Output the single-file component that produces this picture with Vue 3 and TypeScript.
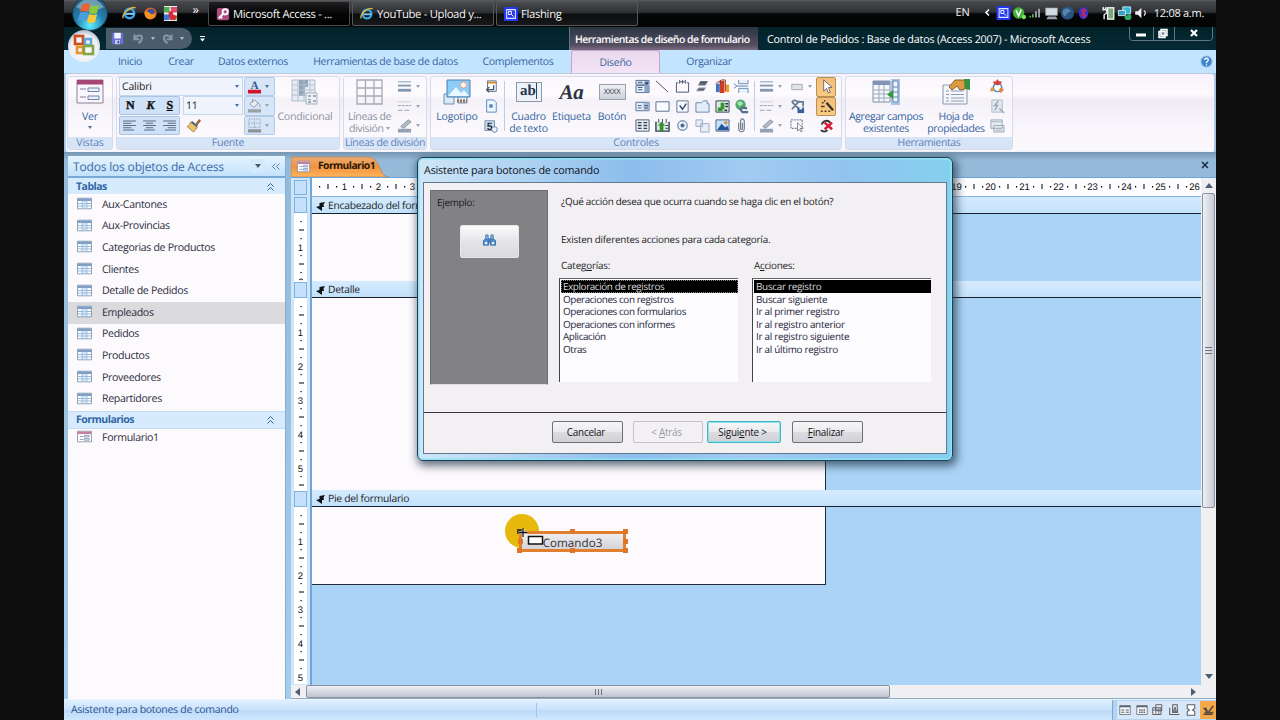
<script setup lang="ts">
interface Task { icon: string; label: string; active?: boolean }

const icons: Record<string, string> = {
  ie: '<circle cx="8" cy="8" r="5" fill="none" stroke="#39a5ea" stroke-width="2.6"/><path d="M4 8.4h9" stroke="#7fd0ff" stroke-width="2"/><path d="M1.500 13C-1 9 9 0 14.500 2" fill="none" stroke="#e8b93a" stroke-width="1.500"/>',
  firefox: '<circle cx="8" cy="8" r="6.500" fill="#e0641c"/><circle cx="8.500" cy="7" r="4" fill="#3d4fa0"/><path d="M2 5c2 0 3 2 5 2 1 2 4 3 6 0 0 5-3 7-6 7-4-1-6-5-5-9z" fill="#f79428"/>',
  puzzle: '<path d="M1 0h14v16H1z" fill="#eee"/><path d="M1 1h6v6H1z" fill="#4fae50"/><path d="M8 1h7v6H9z" fill="#e24a6d"/><path d="M1 9h6v6H1z" fill="#3973d6"/><path d="M9 10h6v5H9z" fill="#8dc95c"/><path d="M6 6l4-1 1 4 4 2-2 4H8l-2-4z" fill="#d32c36"/>',
  key: '<rect x="1" y="1" width="14" height="14" rx="2" fill="#b0497f"/><circle cx="10.500" cy="5.500" r="3" fill="none" stroke="#fff" stroke-width="2.200"/><path d="M8 8l-5 5M5 11l2 2" stroke="#fff" stroke-width="2.200"/>',
  pcs: '<rect x="0" y="0" width="16" height="16" rx="1" fill="#2439ee"/><path d="M3 3h10v10H3z" fill="none" stroke="#dfe3ff" stroke-width="1.200"/><path d="M5 5h3.500v3.500H5zM9 9l2 2" fill="none" stroke="#fff" stroke-width="1.100"/>',
  vv: '<circle cx="7" cy="8" r="6.500" fill="#43b53b"/><path d="M4 5l3 6 3-7" fill="none" stroke="#fff" stroke-width="1.800"/><circle cx="13" cy="12.500" r="2.500" fill="#6ee84c"/>',
  bars: '<path d="M2 13v-2M5 13v-4" stroke="#4ecb45" stroke-width="1.800"/><path d="M8.500 13V6M12 13V3" stroke="#b7c0c5" stroke-width="1.800"/>',
  monitor: '<path d="M1 2h14v9H1z" fill="#b8bec5"/><path d="M2 3h12v7H2z" fill="#d5dbe3"/><path d="M4 12h9l2 3H2z" fill="#98a0aa"/>',
  globe: '<circle cx="8" cy="8" r="7.500" fill="#28557f"/><path d="M3 5c4-4 7-2 9 1l-4 2-3 4C3 10 2 8 3 5z" fill="#5685ad"/>',
  blue: '<ellipse cx="8" cy="8" rx="5.500" ry="7" fill="#2736d8"/><path d="M5 5l6 6-3 2V3l3 2-6 6" fill="none" stroke="#cc2754" stroke-width="1.500"/>',
  plug: '<rect x="7" y="2" width="7" height="13" fill="#7aa67c" stroke="#edf6ee" stroke-width="1.500"/><path d="M1 4h5v4l-3 2v5M2 1v4M5 1v4" fill="none" stroke="#eee" stroke-width="1.600"/>',
  net: '<path d="M6 1h9v8H6z" fill="#35b7d4" stroke="#c9f1f9"/><path d="M1 5h8v6H1z" fill="#339fc8" stroke="#dceef4"/><path d="M8 12a4 4 0 1 0 6-3" fill="#31aa64"/>',
  sound: '<path d="M2 6h3l4-4v12l-4-4H2z" fill="#eee"/><path d="M12 5q3 3 0 6" fill="none" stroke="#eee" stroke-width="1.400"/>',
  disk: '<path d="M1 1h14v14H1z" fill="#6970cf"/><path d="M4 1h8v7H4z" fill="#f2f4ff"/><path d="M5 10h6v5H5z" fill="#c7cdf5"/><path d="M8 11h2v3H8z" fill="#3e4487"/>',
  undo: '<path d="M3 3v6h6M3.500 8C7 2 14 4 12 9c-1 3-3 4-4 5" fill="none" stroke="#8797a6" stroke-width="2.500"/>',
  redo: '<path d="M13 3v6H7M12.500 8C9 2 2 4 4 9c1 3 3 4 4 5" fill="none" stroke="#8797a6" stroke-width="2.500"/>',
  table: '<path d="M.5 1.500h15v13H.5z" fill="#fff" stroke="#7895b5"/><path d="M1 2h14v3H1z" fill="#7f9ec2"/><path d="M1 8h14M1 11h14M5.500 4v10M10.500 4v10" stroke="#91accb"/><path d="M6 5h4v9H6z" fill="#acd5ff" opacity=".6"/>',
  form: '<path d="M.5 1.500h15v13H.5z" fill="#fff" stroke="#8a8eaa"/><path d="M1 2h14v3H1z" fill="#c77ca2"/><path d="M3 8h4M3 11.500h4" stroke="#7d91a9"/><path d="M8 6.500h5v2H8zM8 10.500h5v2H8z" fill="#e7edf8" stroke="#8199b7"/>',
  fontcolor: '<text x="8" y="10.500" text-anchor="middle" font-family="Liberation Serif" font-weight="bold" font-size="12" fill="#38588b">A</text><path d="M1 11.500h14v4H1z" fill="#cf152c"/>',
  fill: '<path d="M3 6l5-4 4 4-5 4zM6 1v4M11 5c3 1 3 3 3 5" fill="#e8edf2" stroke="#8d9ba9"/><path d="M1 12h14v3.500H1z" fill="#9b9fa4"/>',
  gridline: '<path d="M2 1h12v9H2zM2 5.500h12M8 1v9" fill="none" stroke="#9aa8b8" stroke-dasharray="1.500 1"/><path d="M1 12h14v3.500H1z" fill="#8e9298"/>',
  brush: '<path d="M10 6l4-5 2 2-4 5z" fill="#9b6636"/><path d="M5 4l7 6-4 5-7-6c2 0 3-2 4-5z" fill="#eac568" stroke="#a48743"/><path d="M6 4l6 5" stroke="#526486" stroke-width="2"/>',
  combo: '<path d="M1 1.500h14v4H1zM1 7h14v7.500H1z" fill="#e8f1fc" stroke="#536c92"/><path d="M10 2h5v12h-5z" fill="#8ba3c4"/><path d="M11 4h3l-1.500 2zM3 3.500h5M3 9h5M3 11.500h5" stroke="#385072" fill="#263b58"/>',
  combo2: '<path d="M1 3.500h14v9H1z" fill="#e5eefb" stroke="#58708f"/><path d="M9 4h6v8H9z" fill="#a9bbd3"/><path d="M3 7h4M3 9.500h4M10 7h4M10 9.500h4" stroke="#425c83"/>',
  list: '<path d="M1 2h14v12H1z" fill="#e9eef6" stroke="#4b5a70"/><path d="M3 5h4M3 8h4M3 11h4M9 5h4M9 8h4M9 11h4" stroke="#333f54" stroke-width="1.400"/>',
  line: '<path d="M1 2l13 12" stroke="#445" stroke-width="1"/>',
  group: '<path d="M1.500 4v10h13V4h-2M1.500 4h2" fill="none" stroke="#42536e"/><path d="M5 3h6M5 1v4M8 1v4M11 1v4" stroke="#44556d"/>',
  rect: '<path d="M1 3h14v10H1z" fill="#f8fbff" stroke="#526b8c"/>',
  check: '<path d="M2 2h12v12H2z" fill="#f7faff" stroke="#63758e"/><path d="M5 7l3 4 4-6" fill="none" stroke="#34496b" stroke-width="1.600"/>',
  toggle: '<path d="M6 2h8l-3 5H3z" fill="#68717e"/><path d="M4 9h8l-3 4H1z" fill="#8a94a1"/><path d="M5 4h7M3 11h7" stroke="#454d59"/>',
  tab: '<path d="M1 4h6l2-2h4v3h2v9H1z" fill="#e3edfa" stroke="#6987aa"/>',
  pages: '<path d="M1 2h7v7H1zM6 6h9v9H6z" fill="#e6edf6" stroke="#9aabc0"/>',
  chart: '<path d="M1 5h4v9H1z" fill="#3577c9"/><path d="M5 2h5v13H5z" fill="#d33b27"/><path d="M11 6h4v8h-4z" fill="#f09a27"/><path d="M1 5l2-2h3v2M5 2l2-1h4v12" fill="none" stroke="#823720"/>',
  image: '<path d="M1 2h14v12H1z" fill="#c5e2fb" stroke="#506582"/><path d="M2 13l5-7 4 4 2-2 2 5z" fill="#29549b"/><circle cx="11.500" cy="5" r="1.800" fill="#e08a44"/>',
  ole: '<path d="M1 2h14v12H1z" fill="#dce8e0" stroke="#2f4052"/><path d="M3 9h3V4h4v7H8v2H3z" fill="#32932f"/><path d="M10 12h3M11 5h3M11 8h3" stroke="#25354c" stroke-width="1.600"/>',
  olegroup: '<path d="M1 4v10h14V4" fill="#dce8e0" stroke="#2f4052" stroke-width="1.500"/><path d="M4 1v4M8 1v4M12 1v4" stroke="#32465e"/><path d="M5 14V8H3l4-4 4 4H9v6z" fill="#32932f"/><path d="M11 8h3M11 11h3" stroke="#2f4052"/>',
  radio: '<circle cx="8" cy="8" r="5" fill="#edf5ff" stroke="#7894b3" stroke-width="1.500"/><circle cx="8" cy="8" r="2.200" fill="#4a6b93"/>',
  pagebreak: '<path d="M5 1v4h10V1M5 15v-5h10v5" fill="#e9f1ff" stroke="#6b87ad"/><path d="M3 7.500h12M0 5l3 2.500L0 10" fill="none" stroke="#467dbe"/>',
  link: '<circle cx="7" cy="6" r="5.500" fill="#50a86b"/><path d="M3 4l4-2 3 3-4 3z" fill="#a6e5b2"/><path d="M6 10l3 4h6M8 9l6 1" stroke="#55708c" stroke-width="2.300" fill="none"/>',
  clip: '<path d="M5 5v6c0 5 6 5 6 0V4c0-4-4-4-4 0v7c0 2 2 2 2 0V5" fill="none" stroke="#778290" stroke-width="1.300"/>',
  thick: '<path d="M1 3h14" stroke="#7b9bb0"/><path d="M1 7h14" stroke="#8199ad" stroke-width="2"/><path d="M1 12h14" stroke="#8099b1" stroke-width="3"/>',
  dashes: '<path d="M1 3h14" stroke="#a6b0bd" stroke-dasharray="1 1"/><path d="M1 7h14" stroke="#8d9aaa" stroke-dasharray="3 1"/><path d="M1 12h14" stroke="#8f9eae" stroke-dasharray="5 2"/>',
  pencolor: '<path d="M4 9l8-7 3 2-8 7z" fill="#b4bdc7" stroke="#8492a1"/><path d="M1 11.500h14v4H1z" fill="#91a3b4"/>',
  raised: '<path d="M2 5h12v6H2z" fill="#e1e5e9" stroke="#9aa3ad"/>',
  tools: '<path d="M2 3l10 10M10 2l-8 9M2 3q3-3 6 0M9 3h5v5" stroke="#64778e" stroke-width="1.800" fill="none"/><path d="M8 9h7v6H8z" fill="#355f9a"/><path d="M10 9h3v2h-3z" fill="#fff"/>',
  select: '<path d="M1 2h12v9H1z" fill="none" stroke="#566277" stroke-dasharray="2 1"/><path d="M8 5v9l2-2 2 3 1-1-2-3h3z" fill="#fff" stroke="#4c5360" stroke-width=".7"/>',
  cursor: '<path d="M5 1v12l3-3 2 5 2-1-2-5h4z" fill="#fff" stroke="#4a4a54" stroke-width=".8"/>',
  wand: '<path d="M8 4l7 8" stroke="#32302e" stroke-width="2.500"/><path d="M3 4h2M6 1v2M2 8h4M2 13h2M6 13h2M10 13h2" stroke="#50401d" stroke-width="1.500"/>',
  noax: '<path d="M3 7c1-5 7-5 9-2M9 13c-2 2-5 2-7 0" fill="none" stroke="#333" stroke-width="2"/><path d="M6 5l8 7M14 5l-8 7" stroke="#d91a37" stroke-width="2.600"/>',
  number: '<path d="M4 1h10v12H4z" fill="#fff" stroke="#48658d"/><path d="M4 3h10" stroke="#d98328" stroke-width="2"/><path d="M11 6v5H3M6 8l-3 3 3 3" fill="none" stroke="#47546e" stroke-width="1.500"/>',
  title: '<path d="M3 1h8l3 3v11H3z" fill="#edf7ff" stroke="#4e81b9"/><path d="M6 6h4v4H6z" fill="#5d89bf"/>',
  date: '<path d="M1 2h11v11H1z" fill="#cfdeed" stroke="#6785a7"/><text x="3" y="12" font-family="Liberation Sans" font-weight="bold" font-size="12" fill="#222c3d">5</text><circle cx="12" cy="12" r="3.200" fill="#eef6ff" stroke="#59759a"/>',
  order: '<circle cx="8" cy="9" r="4.500" fill="#fff" stroke="#4d83c3" stroke-width="1.500"/><path d="M8 0l1.500 2.500L13 3l-2 2.500-3 1.500-3-1.500L3 3l3.500-.5z" fill="#d2403a"/><path d="M1 9h4l-1 4H0z" fill="#d89a50"/><path d="M11 9l4 2-3 4-3-2z" fill="#e18743"/>',
  code: '<path d="M2 1h11v13H2z" fill="#e4e9f0" stroke="#adb7c4"/><path d="M9 2L5 7h3l-3 5M10 10l5 5" fill="none" stroke="#97a5b6" stroke-width="1.500"/>',
  subform: '<path d="M1 2h12v9H1zM4 8h11v7H4z" fill="#e7ebf0" stroke="#9ba9b9"/><path d="M1 4h12M6 11h7M6 13h7" stroke="#a9b5c2"/>',
  layout: '<path d="M1 2h14v12H1z" fill="#f6f8fa" stroke="#56616e"/><path d="M1 3.500h14M3 8h4M3 11h4M9 8h4M9 11h4" stroke="#56616e" stroke-width="1.500"/>',
  sheet: '<path d="M1 2h14v12H1z" fill="#f6f8fa" stroke="#56616e"/><path d="M1 3.500h14M4 8h2M7 8h2M10 8h2M4 11h2M7 11h2M10 11h2" stroke="#56616e" stroke-width="1.800"/>',
  pivot: '<path d="M5 1h8v8H5zM1 5h11v9H1z" fill="#eee" stroke="#555e6b" stroke-width="1.300"/><path d="M1 8h11M5 5v9M9 5v9" stroke="#555e6b"/>',
  pchart: '<path d="M5 1h6v10H5zM1 5v9h13" fill="#eee" stroke="#555e6b" stroke-width="1.400"/><path d="M5 12V7M8 12V4M11 12V8" stroke="#555e6b" stroke-width="2"/>',
  report: '<path d="M3 1h10v5l-3 2 3 2v5H3v-5l3-2-3-2z" fill="#fff" stroke="#555e6b" stroke-width="1.400"/>',
  design: '<path d="M1 5h5l2 5 6-8 2 1-6 8 5-1v3H2l3-3z" fill="#574b40"/><path d="M2 14h12" stroke="#5b4a3a" stroke-width="1.500"/>',
}

const tasks: Task[] = [
  { icon: 'key', label: 'Microsoft Access - ...', active: true },
  { icon: 'ie', label: 'YouTube - Upload y...' },
  { icon: 'pcs', label: 'Flashing' },
]
const tray = ['pcs', 'vv', 'bars', 'monitor', 'globe', 'blue']
const tray2 = ['plug', 'net', 'sound']
const tables = ['Aux-Cantones', 'Aux-Provincias', 'Categorias de Productos', 'Clientes', 'Detalle de Pedidos', 'Empleados', 'Pedidos', 'Productos', 'Proveedores', 'Repartidores']
const controls = ['combo', 'line', 'group', 'toggle', 'chart', 'pagebreak', 'combo2', 'rect', 'check', 'tab', 'ole', 'link', 'list', 'olegroup', 'radio', 'pages', 'image', 'clip']
const categories = ['Exploración de registros', 'Operaciones con registros', 'Operaciones con formularios', 'Operaciones con informes', 'Aplicación', 'Otras']
const actions = ['Buscar registro', 'Buscar siguiente', 'Ir al primer registro', 'Ir al registro anterior', 'Ir al registro siguiente', 'Ir al último registro']
const views = ['layout', 'sheet', 'pivot', 'pchart', 'report', 'design']
const sections = [
  { key: 'head', marks: 1 },
  { key: 'detail', marks: 5 },
  { key: 'foot', marks: 5 },
]
const step = 34
</script>

<template>
  <div class="stage">
    <div class="desktop">
      <header class="taskbar">
        <div class="quick">
          <svg v-for="i in ['ie', 'firefox', 'puzzle']" :key="i" class="i15" viewBox="0 0 16 16" v-html="icons[i]" />
          <span class="more">»</span>
        </div>
        <div v-for="t in tasks" :key="t.label" class="task" :class="{ active: t.active }">
          <svg class="i14" viewBox="0 0 16 16" v-html="icons[t.icon]" /><span>{{ t.label }}</span>
        </div>
        <div class="tray">
          <span class="lang">EN</span>
          <svg class="chev" viewBox="0 0 6 8"><path d="M5 1L2 4l3 3" fill="none" stroke="#fff" stroke-width="1.600" /></svg>
          <svg v-for="i in tray" :key="i" class="ti" viewBox="0 0 16 16" v-html="icons[i]" />
          <i class="traygap" />
          <svg v-for="i in tray2" :key="i" class="ti" viewBox="0 0 16 16" v-html="icons[i]" />
          <span class="clock">12:08 a.m.</span>
        </div>
        <svg class="orb" viewBox="0 0 38 38">
          <defs><radialGradient id="orb" cx=".5" cy=".85" r=".9"><stop offset="0" stop-color="#5ff0ff" /><stop offset=".45" stop-color="#237fae" /><stop offset="1" stop-color="#294b66" /></radialGradient></defs>
          <circle cx="19" cy="16" r="17.500" fill="url(#orb)" stroke="#17343f" />
          <path d="M5 10Q19-8 33 10 19 18 5 10z" fill="#9fc3d3" opacity=".6" />
          <path d="M11 8q4-3 8-1l-2 8q-4-2-8 0z" fill="#ed612d" /><path d="M20 8q4 2 8 0l-2 8q-4 2-8 0z" fill="#8fc73e" />
          <path d="M9 16q4-2 8 0l-2 8q-4-2-8 0z" fill="#4b9fe0" /><path d="M18 17q4 2 8 0l-2 8q-4 2-8 0z" fill="#fbc937" />
        </svg>
      </header>

      <div class="titlebar">
        <div class="qat">
          <svg class="i13" viewBox="0 0 16 16" v-html="icons.disk" />
          <svg class="i13 undo" viewBox="0 0 16 16" v-html="icons.undo" /><i class="dn pale" />
          <svg class="i13 redo" viewBox="0 0 16 16" v-html="icons.redo" /><i class="dn pale" />
        </div>
        <span class="qatmore"><svg class="qm" viewBox="0 0 5 6"><path d="M0 .5h5" stroke="#fff" /><path d="M0 2.500h5L2.500 5.500z" fill="#fff" /></svg></span>
        <span class="ctx">Herramientas de diseño de formulario</span>
        <span class="apptitle">Control de Pedidos : Base de datos (Access 2007) - Microsoft Access</span>
        <div class="winbtns">
          <svg class="wb" viewBox="0 0 84 14">
            <path d="M.5 0v11q0 2.500 3 2.500h77q3 0 3-2.500V0M24.500 0v13M45.500 0v13" fill="none" stroke="#5f7781" />
            <path d="M7 8h10" stroke="#fff" stroke-width="3" />
            <path d="M32 2.500h6v6h-6zM30 4.500h6v6h-6z" fill="#71858f" stroke="#fff" stroke-width="1.500" />
            <path d="M62 3l6 6M68 3l-6 6" stroke="#fff" stroke-width="2.200" />
          </svg>
        </div>
        <svg class="office" viewBox="0 0 34 34">
          <defs><radialGradient id="ob" cx=".5" cy=".6" r=".6"><stop offset="0" stop-color="#fff" /><stop offset=".75" stop-color="#eceef4" /><stop offset="1" stop-color="#a9b6c6" /></radialGradient></defs>
          <circle cx="17" cy="17" r="16" fill="url(#ob)" />
          <g fill="none" stroke-width="2.600"><rect x="8" y="7" width="8" height="8" stroke="#cf4b1c" /><rect x="18" y="10" width="6" height="6" stroke="#63a6db" /><rect x="10" y="18" width="6" height="6" stroke="#e9922a" /><rect x="17" y="17" width="9" height="8" stroke="#85a644" /></g>
        </svg>
      </div>

      <nav class="tabs">
        <span class="t1">Inicio</span><span class="t2">Crear</span><span class="t3">Datos externos</span><span class="t4">Herramientas de base de datos</span><span class="t5">Complementos</span><span class="t6 on">Diseño</span><span class="t7">Organizar</span>
        <svg class="help" viewBox="0 0 14 14"><circle cx="7" cy="7" r="6" fill="#3f83cf" stroke="#9cc3ea" /><path d="M5 5.500q0-2 2-2t2 1.800q0 1-2 2.200V9M7 10v1.300" fill="none" stroke="#fff" stroke-width="1.400" /></svg>
      </nav>

      <section class="ribbon">
        <div class="grp g1">
          <div class="body">
            <div class="big w45">
              <svg class="pic" viewBox="0 0 28 26"><path d="M1 1h26v23H1z" fill="#f9f5fc" stroke="#8c8193" /><path d="M1 1h26v4.500H1z" fill="#a54775" /><path d="M4 10h6M4 18h6" stroke="#8a7d99" /><path d="M12 9h11v3.500H12zM12 17h11v3.500H12z" fill="#e9effb" stroke="#7387ad" /></svg>
              <span>Ver</span><i class="dn" />
            </div>
          </div>
          <footer>Vistas</footer>
        </div>

        <div class="grp g2">
          <div class="body">
            <div class="fontcol">
              <div class="combo"><span>Calibri</span><i class="dn" /></div>
              <div class="frow"><div class="seg nks"><b>N</b><b class="it">K</b><b class="un">S</b></div><div class="combo size"><span>11</span><i class="dn" /></div></div>
              <div class="frow">
                <div class="seg"><svg v-for="n in 3" :key="n" class="al" viewBox="0 0 14 12"><path :d="n === 1 ? 'M0 1h14M0 3.500h9M0 6h14M0 8.500h9M0 11h12' : n === 2 ? 'M0 1h14M3 3.500h8M0 6h14M3 8.500h8M1 11h12' : 'M0 1h14M5 3.500h9M0 6h14M5 8.500h9M2 11h12'" stroke="#5c6b80" stroke-width="1.100" /></svg></div>
                <svg class="i15 brush" viewBox="0 0 16 16" v-html="icons.brush" />
              </div>
            </div>
            <div class="colorcol">
              <div v-for="i in ['fontcolor', 'fill', 'gridline']" :key="i" class="split"><svg class="i15" viewBox="0 0 16 16" v-html="icons[i]" /><i class="dn" :class="{ dim: i !== 'fontcolor' }" /></div>
            </div>
            <div class="big w61 gray">
              <svg class="pic" viewBox="0 0 28 26"><path d="M1 1h23v21H1z" fill="#e4ebf3" stroke="#b0bdcc" /><path d="M8 1h9v7h-3v9H8z" fill="#8fa3b9" /><path d="M1 6h23M1 11h23M1 16h23M7 1v21M13 1v21M19 1v21" stroke="#b5c3d1" /><path d="M15 14h11v11H15z" fill="#eef2f5" stroke="#a5b1bd" /><path d="M17 17h3M22 17h3M17 20l3 1M22 22h3M17 23h3" stroke="#8897a7" stroke-width="1.300" /></svg>
              <span>Condicional</span>
            </div>
          </div>
          <footer>Fuente</footer>
        </div>

        <div class="grp g3">
          <div class="body">
            <div class="big w49 gray">
              <svg class="pic" viewBox="0 0 28 26"><path d="M1 1h25v24H1zM1 9h25M1 17h25M9.500 1v24M18 1v24" fill="none" stroke="#a4abb5" stroke-width="1.300" /></svg>
              <span>Líneas de<br>división <i class="dn dim inl" /></span>
            </div>
            <div class="stack w33"><div v-for="i in ['thick', 'dashes', 'pencolor']" :key="i"><svg class="i15" viewBox="0 0 16 16" v-html="icons[i]" /><i class="dn dim" /></div></div>
          </div>
          <footer>Líneas de división</footer>
        </div>

        <div class="grp g4">
          <div class="body">
            <div class="big w54">
              <svg class="pic" viewBox="0 0 28 26"><path d="M1 15h10v10H1zM15 15h9v9h-9z" fill="#dce9f6" stroke="#6d8fb4" /><path d="M4 1h23v17H4z" fill="#8cccf6" stroke="#4f7faa" /><path d="M5 17l8-9 5 6 3-3 5 6z" fill="#e9f7ff" /><circle cx="20.500" cy="6" r="3" fill="#fff" stroke="#f09a68" /><path d="M14 22h10" stroke="#9d6d53" stroke-width="3" stroke-dasharray="2 1" /></svg>
              <span>Logotipo</span>
            </div>
            <div class="stack w15"><div v-for="i in ['number', 'title', 'date']" :key="i"><svg class="i14" viewBox="0 0 16 16" v-html="icons[i]" /></div></div>
            <i class="vsep s1" />
            <div class="big w46"><div class="pic"><div class="abl"><b>ab</b></div></div><span>Cuadro<br>de texto</span></div>
            <div class="big w42"><div class="pic aa"><em>Aa</em></div><span>Etiqueta</span></div>
            <div class="big w38"><div class="pic"><div class="xxxx">XXXX</div></div><span>Botón</span></div>
            <div class="cgrid"><svg v-for="i in controls" :key="i" class="i15" viewBox="0 0 16 16" v-html="icons[i]" /></div>
            <i class="vsep" />
            <div class="stack w30"><div v-for="i in ['thick', 'dashes', 'pencolor']" :key="i"><svg class="i15" viewBox="0 0 16 16" v-html="icons[i]" /><i class="dn dim" /></div></div>
            <div class="stack w31"><div><svg class="i14" viewBox="0 0 16 16" v-html="icons.raised" /><i class="dn dim" /></div><div class="lft"><svg class="i15" viewBox="0 0 16 16" v-html="icons.tools" /></div><div class="lft"><svg class="i15" viewBox="0 0 16 16" v-html="icons.select" /></div></div>
            <div class="stack w20"><div class="hot"><svg class="i15" viewBox="0 0 16 16" v-html="icons.cursor" /></div><div class="hot"><svg class="i15" viewBox="0 0 16 16" v-html="icons.wand" /></div><div><svg class="i15" viewBox="0 0 16 16" v-html="icons.noax" /></div></div>
          </div>
          <footer>Controles</footer>
        </div>

        <div class="grp g5">
          <div class="body">
            <div class="big w82">
              <svg class="pic" viewBox="0 0 28 26"><path d="M1 2h17v21H1z" fill="#f4f6fa" stroke="#8290a7" /><path d="M1 2h17v4H1z" fill="#8293b5" /><path d="M1 11h17M1 15h17M1 19h17M7 6v17M12 6v17" stroke="#9aa9bd" /><path d="M19 0h9v26h-9z" fill="#aac4e6" /><path d="M21 2h5v21h-5zM21 8h5M21 13h5M21 18h5" fill="#eef4fc" stroke="#6788b5" /><path d="M21 11v9l-6-4.500z" fill="#2f9b35" /></svg>
              <span>Agregar campos<br>existentes</span>
            </div>
            <div class="big w61">
              <svg class="pic" viewBox="0 0 28 26"><path d="M1 6h24v19H1z" fill="#f5f7fc" stroke="#8796ad" /><path d="M4 12h3M9 12h13M4 15.500h3M9 15.500h13M4 19h3M9 19h13M4 22h3M9 22h13" stroke="#8d9ab0" /><path d="M7 8l6-7h10v9l-5 1-3-4-5 4z" fill="#dc9b43" stroke="#94602b" /><path d="M22 0h6v11l-5-1z" fill="#37913f" /></svg>
              <span>Hoja de<br>propiedades</span>
            </div>
            <div class="stack w22"><div v-for="i in ['order', 'code', 'subform']" :key="i"><svg class="i15" viewBox="0 0 16 16" v-html="icons[i]" /></div></div>
          </div>
          <footer>Herramientas</footer>
        </div>
      </section>

      <main class="work">
        <aside class="nav">
          <div class="navhead"><span>Todos los objetos de Access</span><b class="drop"><i class="dn dark" /></b><svg class="dbl" viewBox="0 0 8 7"><path d="M3.500 .5l-3 3 3 3M7.500 .5l-3 3 3 3" fill="none" stroke="#5f7fa9" /></svg></div>
          <div class="cat"><span>Tablas</span><svg class="up" viewBox="0 0 7 8"><path d="M.5 3.500l3-3 3 3M.5 7.500l3-3 3 3" fill="none" stroke="#36618f" /></svg></div>
          <div class="items">
            <div v-for="t in tables" :key="t" class="item" :class="{ sel: t === 'Empleados' }"><svg class="i14w" viewBox="0 0 16 16" preserveAspectRatio="none" v-html="icons.table" /><span>{{ t }}</span></div>
          </div>
          <div class="cat second"><span>Formularios</span><svg class="up" viewBox="0 0 7 8"><path d="M.5 3.500l3-3 3 3M.5 7.500l3-3 3 3" fill="none" stroke="#36618f" /></svg></div>
          <div class="item one"><svg class="i14w" viewBox="0 0 16 16" preserveAspectRatio="none" v-html="icons.form" /><span>Formulario1</span></div>
        </aside>

        <section class="doc">
          <div class="doctabs">
            <svg class="tabshape" viewBox="0 0 102 21" preserveAspectRatio="none"><defs><linearGradient id="tg" x2="0" y2="1"><stop offset="0" stop-color="#ecab72" /><stop offset=".5" stop-color="#f0943f" /><stop offset="1" stop-color="#ffb45a" /></linearGradient></defs><path d="M0 21V3q0-2 3-2h78q6 0 10 8l4 8q2 4 7 4z" fill="url(#tg)" stroke="#b5855c" stroke-width=".8" /></svg>
            <div class="dtab"><svg class="i14w" viewBox="0 0 16 16" v-html="icons.form" /><b>Formulario1</b></div>
            <svg class="x" viewBox="0 0 8 8"><path d="M1 1l6 6M7 1L1 7" stroke="#1d2b3c" stroke-width="1.500" /></svg>
          </div>
          <div class="editor">
            <div class="vruler">
              <div class="corner" />
              <div v-for="s in sections" :key="s.key" class="vsec" :class="s.key">
                <div class="sel" />
                <svg class="vr" width="15" height="100%">
                  <g v-for="n in s.marks + 1" :key="n">
                    <rect x="6.500" :y="(n - 1) * step + 7" width="1.200" height="1.200" />
                    <rect x="5" :y="(n - 1) * step + 15.500" width="5" height="1" />
                    <rect x="6.500" :y="(n - 1) * step + 24" width="1.200" height="1.200" />
                    <text v-if="n <= s.marks" x="6.500" :y="n * step + 3">{{ n }}</text>
                  </g>
                  <path v-if="s.key === 'head'" d="M5 66q2-2.500 4 0" fill="none" stroke="#111" />
                </svg>
              </div>
            </div>
            <div class="canvas">
              <svg class="hruler" width="889" height="19">
                <g v-for="n in 26" :key="n">
                  <rect :x="(n - 1) * step + 7" y="8" width="1.200" height="1.500" />
                  <rect :x="(n - 1) * step + 15.500" y="6" width="1" height="5" />
                  <rect :x="(n - 1) * step + 24" y="8" width="1.200" height="1.500" />
                  <text :x="n * step - 1.500" y="11.800">{{ n }}</text>
                </g>
              </svg>
              <div class="sbar"><svg class="arr" viewBox="0 0 9 9"><path d="M3.500 1L9 0 7.500 2.500 8 5H6v4L0 5l3.500-1z" /></svg><span>Encabezado del form</span></div>
              <div class="page head" />
              <div class="sbar"><svg class="arr" viewBox="0 0 9 9"><path d="M3.500 1L9 0 7.500 2.500 8 5H6v4L0 5l3.500-1z" /></svg><span>Detalle</span></div>
              <div class="page detail" />
              <div class="sbar"><svg class="arr" viewBox="0 0 9 9"><path d="M3.500 1L9 0 7.500 2.500 8 5H6v4L0 5l3.500-1z" /></svg><span>Pie del formulario</span></div>
              <div class="page foot">
                <div class="halo" />
                <div class="cmd">Comando3<i v-for="h in 8" :key="h" class="h" :class="'h' + h" /></div>
                <svg class="pointer" viewBox="0 0 26 18"><path d="M5 1v9M.5 5.500h9" stroke="#fff" stroke-width="2.400" /><path d="M5 1v9M.5 5.500h9" stroke="#111" stroke-width="1.300" /><rect x="10.500" y="9.500" width="14" height="7.500" fill="#fff" stroke="#111" stroke-width="1.500" /></svg>
              </div>
            </div>
            <div class="vscroll"><i class="aup" /><div class="vthumb"><i /></div><i class="adn" /></div>
          </div>
          <div class="hscroll"><i class="alf" /><div class="hthumb"><i /></div><i class="art" /></div>
        </section>
      </main>

      <footer class="status">
        <span>Asistente para botones de comando</span><i class="ssep" />
        <div class="views"><b v-for="v in views" :key="v" :class="{ on: v === 'design' }"><svg class="i12" viewBox="0 0 16 16" v-html="icons[v]" /></b></div>
      </footer>

      <div class="dialog">
        <div class="dtitle">Asistente para botones de comando</div>
        <div class="dbody">
          <div class="dtop">
            <div class="sample"><span>Ejemplo:</span>
              <div class="sbtn"><svg viewBox="0 0 16 14"><path d="M4 1h2.500v5H4zM9.500 1H12v5H9.500z" fill="#8fb8e0" stroke="#4179b7" /><path d="M1.500 7L4 5l3 2v5H1.500zM9 7l3-2 2.500 2v5H9zM7 5h2v4H7z" fill="#5a90cb" stroke="#3a6fae" /><path d="M3 8.500h2.500v2.500H3zM10.500 8.500H13v2.500h-2.500z" fill="#e3f3ff" /></svg></div>
            </div>
            <div class="form">
              <p class="q">¿Qué acción desea que ocurra cuando se haga clic en el botón?</p>
              <p class="e">Existen diferentes acciones para cada categoría.</p>
              <div class="lists">
                <div class="cats"><label>Categ<u>o</u>rías:</label><ul><li v-for="(c, i) in categories" :key="c" :class="{ on: i === 0, foc: i === 0 }">{{ c }}</li></ul></div>
                <div><label>A<u>c</u>ciones:</label><ul><li v-for="(c, i) in actions" :key="c" :class="{ on: i === 0 }">{{ c }}</li></ul></div>
              </div>
            </div>
          </div>
          <div class="dbtns"><button class="b1">Cancelar</button><button class="b2" disabled>&lt; <u>A</u>trás</button><button class="b3">Sigui<u>e</u>nte &gt;</button><button class="b4"><u>F</u>inalizar</button></div>
        </div>
      </div>
    </div>
  </div>
</template>

<style>
html, body { margin: 0; background: #0d0d0d; }
</style>

<style scoped>
* { box-sizing: border-box; }
.stage { width: 1280px; height: 720px; overflow: hidden; background: #0e0e0e; display: flex; justify-content: center; font-family: "Open Sans", "Noto Sans", sans-serif; font-size: 10.5px; text-rendering: geometricPrecision; white-space: nowrap; }
.desktop { width: 1152px; height: 720px; position: relative; display: flex; flex-direction: column; background: #9dc5e5; }
svg { display: block; flex: none; }
.i15 { width: 15px; height: 15px; } .i14 { width: 14px; height: 14px; } .i13 { width: 13px; height: 13px; } .i12 { width: 12px; height: 12px; }
.i14w { width: 15px; height: 13px; }
i { display: block; font-style: normal; flex: none; }
.dn { width: 0; height: 0; border: 2.500px solid transparent; border-top: 3px solid #4c719e; border-bottom: 0; }
.dn.dim { border-top-color: #9ba5b1; } .dn.pale { border-top-color: #aebdc8; } .dn.dark { border-top-color: #4d5a6b; border-width: 4px 3.500px 0; }

.taskbar { height: 27px; flex: none; position: relative; display: flex; align-items: flex-start; background: linear-gradient(#5c5d60 0, #47484b 2px, #303134 12px, #050607 14px, #020303 100%); color: #f4f4f4; }
.quick { width: 143px; height: 27px; padding-left: 58px; display: flex; align-items: center; gap: 5.500px; }
.more { font-size: 13px; margin: -10px 0 0 9px; }
.task { width: 142px; height: 25px; margin: 1px 1px 0 1px; padding-left: 7px; display: flex; align-items: center; gap: 3px; border: 1px solid #55585b; border-radius: 2px; background: linear-gradient(#4b4c4f, #2c2d30 48%, #0c0d0e 52%, #17181a); font-size: 11.300px; }
.task span { letter-spacing: -.33px; padding-top: 1px; }
.task.active { background: linear-gradient(#202022, #050506 50%, #000); border-color: #4a4c4e; }
.tray { margin-left: auto; height: 25px; padding-right: 12px; display: flex; align-items: center; gap: 1px; font-size: 11px; }
.ti { width: 15px; height: 14px; }
.lang { margin-right: 13px; padding-bottom: 1px; } .chev { width: 6px; height: 9px; margin-right: 5px; } .traygap { width: 8px; }
.clock { margin-left: 5px; letter-spacing: -.28px; padding-top: 2px; }
.orb { position: absolute; left: 7px; top: -3px; width: 38px; height: 38px; z-index: 3; }

.titlebar { height: 23px; flex: none; position: relative; display: flex; align-items: center; background: linear-gradient(#02222a, #062a35); color: #fff; font-size: 10.800px; }
.qat { width: 86px; height: 21px; margin-left: 42px; padding-left: 5px; display: flex; align-items: center; gap: 6px; border-radius: 0 11px 11px 0; background: #4b5d6b; }
.undo { margin-left: 2px; }
.qatmore { width: 377px; padding-left: 8px; } .qm { width: 5px; height: 6px; }
.ctx { width: 189px; height: 23px; padding: 3px 0 0 5px; line-height: 21px; font-size: 10.400px; font-weight: 600; letter-spacing: -.49px; background: linear-gradient(#2a3542, #564f62 80%, #7d6c82); border-left: 1px solid #647482; }
.apptitle { margin-left: 9px; padding-top: 2px; letter-spacing: -.22px; }
.winbtns { margin-left: auto; width: 87px; align-self: flex-start; } .wb { width: 84px; height: 14px; }
.office { position: absolute; left: 3px; top: 2px; width: 34px; height: 34px; z-index: 4; }

.tabs { height: 23px; flex: none; display: flex; position: relative; background: #c3e4ff; color: #3463a0; line-height: 25px; text-align: center; letter-spacing: -.3px; }
.t1 { width: 52px; margin-left: 40px; } .t2 { width: 50px; } .t3 { width: 94px; } .t4 { width: 171px; } .t5 { width: 94px; } .t6 { width: 89px; margin-left: 6px; line-height: 24px; } .t7 { width: 98px; }
.on.t6 { background: linear-gradient(#ead9ed, #f4e4f6); border: 1px solid #c6a3cf; border-bottom: 0; border-radius: 3px 3px 0 0; }
.help { position: absolute; right: 3px; top: 5px; width: 13px; height: 13px; }

.ribbon { height: 79px; flex: none; margin: 0 1px 0 1px; padding: 2px 1px 1px; display: flex; background: linear-gradient(#f8f3fb, #fdf9fe 20px, #efeaf4 26px, #f8f4fb 50px, #fcf9fe); border: 1px solid #b8c9e0; border-bottom-color: #f2f6fc; border-radius: 3px; color: #3463a0; letter-spacing: -.2px; }
.grp { height: 74px; display: flex; flex-direction: column; border: 1px solid #d6dbea; border-radius: 3px; margin-right: 3px; background: rgba(255, 255, 255, .35); }
.g1 { width: 46px; } .g2 { width: 224px; } .g3 { width: 84px; letter-spacing: -.35px; } .g4 { width: 412px; } .g5 { width: 168px; letter-spacing: -.38px; }
.g1, .g2, .g3, .g4, .g5 { flex: none; }
.body { height: 60px; display: flex; }
.grp footer { height: 12px; line-height: 13px; text-align: center; background: #d7e5f7; color: #5d83b8; }
.big { display: flex; flex-direction: column; align-items: center; padding-top: 2px; text-align: center; line-height: 12px; flex: none; }
.big > span { margin-top: 6px; } .big > .dn { margin-top: 3px; }
.big.gray { color: #8b929c; }
.pic { width: 28px; height: 26px; display: flex; align-items: center; justify-content: center; }
.inl { display: inline-block; vertical-align: 2px; }
.w45 { width: 44px; } .w61 { width: 60px; } .w49 { width: 51px; } .w54 { width: 52px; } .w46 { width: 43px; } .w42 { width: 43px; } .w38 { width: 38px; } .w82 { width: 80px; }
.fontcol { width: 127px; padding: 0 0 0 2px; flex: none; }
.combo { height: 19px; width: 124px; display: flex; align-items: center; justify-content: space-between; padding: 0 3px 0 2px; background: #f0f5fd; border: 1px solid #c5d7ed; color: #222; }
.combo.size { width: 60px; margin-left: 3px; }
.frow { display: flex; height: 19.500px; align-items: center; }
.seg { width: 61px; height: 19px; display: flex; align-items: center; justify-content: space-around; background: #cfe2f8; border: 1px solid #a9c4e5; border-radius: 2px; }
.nks { font-family: "Liberation Serif", serif; font-size: 12px; color: #111; -webkit-text-stroke: .4px #111; } .it { font-style: italic; } .un { text-decoration: underline; }
.al { width: 13px; height: 11px; } .brush { margin-left: 6px; }
.colorcol { width: 31px; flex: none; }
.split { height: 19.300px; display: flex; align-items: center; gap: 3px; padding-left: 2px; background: #d6e5f8; border: 1px solid #b4cae5; border-radius: 2px; }
.stack { display: flex; flex-direction: column; flex: none; }
.stack > div { height: 19.600px; display: flex; align-items: center; justify-content: center; gap: 4px; }
.stack > .lft { justify-content: flex-start; padding-left: 5px; }
.w33 { width: 33px; margin-left: -3px; } .w15 { width: 16px; } .w30 { width: 29px; } .w31 { width: 31px; } .w20 { width: 20px; } .w22 { width: 23px; }
.stack > .hot { background: linear-gradient(#f5bd7a, #f8cc82); border: 1px solid #b69055; border-radius: 2px; }
.vsep { width: 1px; height: 50px; margin: 4px 1px 0 2px; background: #bccee4; } .s1 { margin-left: 5px; margin-right: 2px; }
.cgrid { width: 119px; margin-left: 2px; flex: none; display: grid; grid-template-columns: repeat(6, 19.800px); grid-auto-rows: 19.600px; align-items: center; justify-items: center; }
.abl { width: 26px; height: 20px; border: 1px solid #8b98a9; background: #edf2f8; font: 15px "Liberation Serif", serif; letter-spacing: 0; color: #26364d; }
.abl b { border-right: 1px solid #345; line-height: 17px; }
.aa { font: bold 21px "Liberation Serif", serif; color: #2c3340; }
.xxxx { width: 27px; height: 16px; line-height: 14px; border: 1px solid #9aa1ac; background: linear-gradient(#eff1f5, #cdd2da); font-size: 7.500px; color: #3e434d; }

.work { flex: none; height: 547px; padding: 4px 0 0 4px; display: flex; background: linear-gradient(#7595b1 0, #95b9d8 8px, #a5cdee 100%); }
.nav { width: 218px; height: 543px; flex: none; background: #fcfafd; border-right: 1px solid #82aeda; }
.navhead { height: 22px; padding: 0 5px 0 5px; display: flex; align-items: center; background: linear-gradient(#e6f4ff, #c3e1fb); border-bottom: 2px solid #78aad9; color: #396aa6; font-size: 12px; }
.navhead span { flex: 1; letter-spacing: -.17px; } .drop { width: 14px; height: 14px; display: grid; place-items: center; background: #d4e9fc; margin-right: 7px; }
.dbl { width: 8px; height: 7px; }
.cat { height: 16px; padding: 1px 11px 0 8px; display: flex; align-items: center; justify-content: space-between; background: #d6ebfd; color: #2f66a5; font-weight: 700; font-size: 10.500px; letter-spacing: -.5px; }
.up { width: 7px; height: 8px; }
.items { height: 215.500px; }
.item { height: 21.600px; display: flex; align-items: center; gap: 10px; padding-left: 9px; color: #2c2c40; font-size: 10.600px; letter-spacing: -.33px; }
.item svg { margin-top: -2px; }
.item.sel { background: #dbdadd; }
.cat.second { height: 18px; padding-top: 0; margin-top: 1px; border-bottom: 1px solid #c2dbf1; border-top: 1px solid #c2dbf1; }
.item.one { height: 18px; }

.doc { width: 925px; margin-left: 5px; height: 543px; flex: none; display: flex; flex-direction: column; }
.doctabs { height: 21px; position: relative; display: flex; align-items: center; justify-content: space-between; }
.tabshape { position: absolute; left: 0; top: 0; width: 98px; height: 21px; }
.dtab { position: relative; display: flex; align-items: center; gap: 7px; padding: 0 0 1px 5px; color: #2a1808; letter-spacing: -.55px; font-size: 10.300px; }
.x { width: 8px; height: 8px; margin: -3px 7px 0 0; }
.editor { height: 508px; display: flex; background: #aad3f5; border-top: 1px solid #6aa4d9; }
.vruler { width: 21px; flex: none; height: 507px; overflow: hidden; padding: 2px 3px 0 3px; background: #cfe5fa; border-right: 2px solid #6ea6da; }
.corner { height: 15px; margin-bottom: 2px; background: #c4e0fa; border: 1px solid #7eb2e2; }
.vsec { background: #fff; display: flex; flex-direction: column; overflow: hidden; }
.vsec.head { height: 85px; } .vsec.detail { height: 209px; } .vsec.foot { height: 193px; }
.vsec .sel { height: 16px; margin-bottom: 1px; flex: none; background: #c4e0fa; border: 1px solid #7eb2e2; }
.vr { height: auto; flex: 1; overflow: hidden; }
.vr text, .hruler text { font: 9.500px "Liberation Sans", sans-serif; text-anchor: middle; fill: #111; }
.canvas { width: 889px; flex: none; position: relative; height: 507px; overflow: hidden; }
.hruler { background: #fdfcfe; border-bottom: 1px solid #83b6e4; }
.sbar { height: 17px; display: flex; align-items: center; gap: 3px; padding: 2px 0 0 4px; background: linear-gradient(#d5ebff, #c3e1fb); border-bottom: 1.500px solid #17212d; color: #222; font-size: 10.300px; letter-spacing: -.25px; }
.arr { width: 9px; height: 9px; fill: #111; }
.page { width: 514px; background: #fdfafe; border-right: 1px solid #222c38; }
.page.head { height: 67px; } .page.detail { height: 192px; } .page.foot { height: 78px; position: relative; border-bottom: 1px solid #222c38; }
.halo { position: absolute; left: 193px; top: 7px; width: 34px; height: 34px; border-radius: 50%; background: #e7b90c; }
.cmd { position: absolute; left: 207px; top: 24px; width: 107px; height: 21px; border: 3px solid #e07f2e; background: linear-gradient(#eeedf0, #d3d3d8); text-align: center; line-height: 18px; font-size: 11.700px; color: #333; }
.h { position: absolute; width: 5px; height: 5px; background: #dd7628; }
.h1 { left: -5px; top: -5px; background: #493714; } .h2 { left: 48px; top: -5px; } .h3 { right: -5px; top: -5px; } .h4 { right: -5px; top: 5px; } .h5 { right: -5px; bottom: -4px; } .h6 { left: 48px; bottom: -4px; } .h7 { left: -5px; bottom: -4px; } .h8 { left: -4px; top: 5px; }
.pointer { position: absolute; left: 206px; top: 20px; width: 26px; height: 18px; }
.vscroll { width: 15px; background: #f0eff2; padding: 3px 0 6px; display: flex; flex-direction: column; align-items: center; }
.aup { border: 4px solid transparent; border-top: 0; border-bottom: 5px solid #4d5d72; margin: 2px 0 5px; } .adn { border: 4px solid transparent; border-bottom: 0; border-top: 5px solid #4d5d72; margin-top: auto; }
.vthumb { width: 13px; height: 315px; display: grid; place-items: center; border: 1px solid #8a92a1; border-radius: 2px; background: linear-gradient(90deg, #eef0f4, #c7cad5); }
.vthumb i { width: 7px; height: 7px; background: repeating-linear-gradient(#6d7484 0 1px, transparent 1px 3px); }
.hscroll { height: 14px; display: flex; align-items: center; background: #f0eff2; border-bottom: 1px solid #8facc6; padding: 0 20px 0 4px; }
.alf { border: 4px solid transparent; border-left: 0; border-right: 5px solid #4d5d72; } .art { border: 4px solid transparent; border-right: 0; border-left: 5px solid #4d5d72; margin-left: auto; }
.hthumb { width: 584px; height: 13px; margin-left: 6px; display: grid; place-items: center; border: 1px solid #8a92a1; border-radius: 2px; background: linear-gradient(#eef0f4, #bfc3cf); }
.hthumb i { width: 7px; height: 6px; background: repeating-linear-gradient(90deg, #6d7484 0 1px, transparent 1px 3px); }

.status { height: 21px; flex: none; display: flex; align-items: center; padding-left: 7px; background: linear-gradient(#dff0ff, #c8e2fc 50%, #bcdaf8 52%, #cfe7ff); border-top: 1px solid #e8f4ff; color: #2a5490; letter-spacing: -.28px; }
.status span { width: 465px; }
.ssep { width: 1px; height: 14px; background: #a3c7ea; }
.views { margin-left: auto; width: 104px; height: 20px; display: flex; align-items: center; background: #b4d3f2; border-left: 1px solid #7ba7d6; padding: 0 0 0 4px; }
.views b { width: 16.500px; height: 18px; display: grid; place-items: center; background: #d8e7f7; }
.views b.on { background: #f3a94a; }

.dialog { position: absolute; left: 353px; top: 157px; width: 536px; height: 304px; padding: 0 5px 6px; display: flex; flex-direction: column; border: 1px solid #1d4152; border-radius: 6px; background: linear-gradient(90deg, #cfe6f8, #8cbdec 40%, #a2cbf2 62%, #92c3ef 80%, #84d0ee); box-shadow: inset 0 0 0 1.500px #8fe3f5, 2px 3px 9px 2px rgba(25, 45, 65, .65); color: #1b1b25; }
.dtitle { height: 24px; padding-left: 1px; line-height: 25px; font-size: 10.800px; letter-spacing: -.2px; color: #10151d; }
.dbody { flex: 1; border: 1px solid #62788c; background: #f2f0f3; font-size: 9.900px; letter-spacing: -.28px; }
.dtop { height: 230px; display: flex; border-bottom: 1px solid #34343a; padding: 7px 0 0 6px; }
.sample { width: 118px; height: 195px; padding: 4px 6px; background: #828184; border: 1px solid #6b6a6d; border-bottom-color: #ddd; }
.sbtn { width: 59px; height: 33px; margin: 16px 0 0 23px; display: grid; place-items: center; border: 1px solid #e7e7ea; border-radius: 2px; background: linear-gradient(#fbfbfc, #e5e5e9 50%, #d9d9de); }
.sbtn svg { width: 15px; height: 13px; margin: -2px 1px 0 0; }
.form { padding-left: 13px; } .form p { margin: 0; line-height: 14px; } .q { padding-top: 4px; } .form .e { margin-top: 24px; letter-spacing: -.23px; }
.lists { display: flex; gap: 16px; margin-top: 13px; } .lists label { display: block; line-height: 13px; }
.cats { letter-spacing: -.4px; } .cats label { letter-spacing: -.2px; }
ul { list-style: none; margin: 6px 0 0 -2px; padding: 1px 0 0 1px; width: 179px; height: 104px; background: #fdfcfe; border-left: 1px solid #444; border-top: 1px solid #666; }
li { height: 12.600px; line-height: 12.600px; padding-left: 2px; color: #24243a; }
li.on { background: #000; color: #d9d9dc; } li.foc { outline: 1px dotted #888; outline-offset: -1px; }
.dbtns { display: flex; padding: 8px 0 0 128px; }
button { height: 22px; padding: 0 3px 0 0; font: inherit; letter-spacing: -.22px; color: #15151c; border: 1px solid #707076; border-radius: 2px; background: linear-gradient(#f6f5f7, #ebebee 48%, #dcdce0 52%, #d0d0d5); }
.b1 { width: 71px; } .b2 { width: 70px; margin-left: 10px; color: #9c9ca3; border-color: #c3c2c7; background: #f3f1f4; } .b3 { width: 74px; margin-left: 4px; border-color: #40b5c6; box-shadow: inset 0 0 0 1px #8be2ec; } .b4 { width: 71px; margin-left: 11px; }
</style>
